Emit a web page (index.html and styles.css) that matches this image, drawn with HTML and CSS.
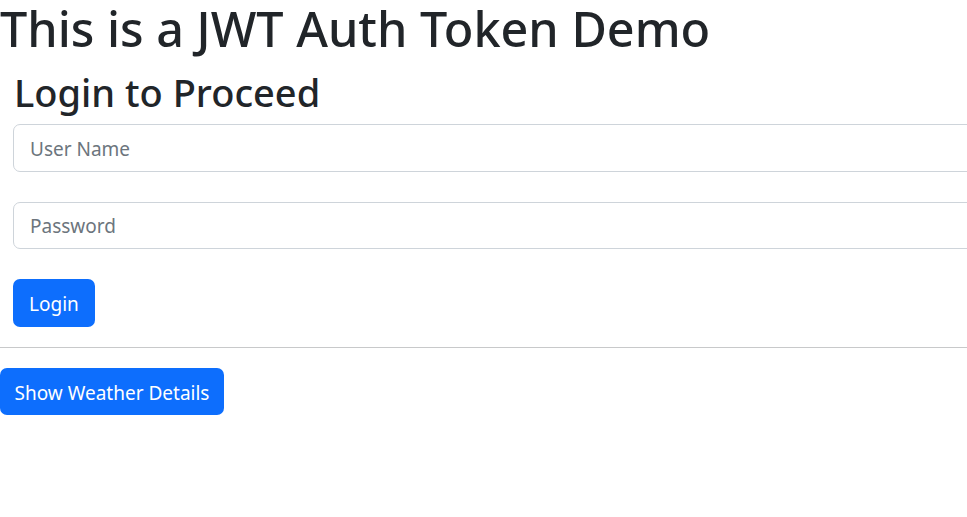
FILE: index.html
```html
<!DOCTYPE html>
<html lang="en">
<head>
<meta charset="utf-8">
<title>JWT Auth Token Demo</title>
<link rel="stylesheet" href="styles.css">
</head>
<body>
<h1 class="title">This is a JWT Auth Token Demo</h1>
<section class="login">
  <h2 class="login-title">Login to Proceed</h2>
  <form class="login-form">
    <input class="field" type="text" placeholder="User Name">
    <input class="field" type="password" placeholder="Password">
    <div><button type="button" class="btn">Login</button></div>
  </form>
</section>
<hr class="divider">
<button type="button" class="btn">Show Weather Details</button>
</body>
</html>
```

FILE: styles.css
```css
html, body {
  margin: 0;
  overflow: hidden;
  background: #fff;
}
body {
  font-family: "Noto Sans", "Open Sans", sans-serif;
  color: #212529;
  font-size: 20px;
}
.title {
  margin: 0;
  font-size: 48.5px;
  font-weight: 500;
  line-height: 56px;
}
.login {
  padding: 11px 0 0 13px;
}
.login-title {
  margin: 0 0 7px 1px;
  font-size: 38px;
  font-weight: 500;
  line-height: 50px;
}
.login-form {
  display: flex;
  flex-direction: column;
  gap: 30px;
}
.field {
  box-sizing: border-box;
  width: calc(100% + 40px);
  height: 47.5px;
  padding: 2px 16px 0;
  border: 1px solid #ced4da;
  border-radius: 7px;
  font-family: inherit;
  font-size: 19px;
  color: #212529;
}
.field::placeholder {
  color: #6c757d;
}
.btn {
  height: 47.5px;
  padding: 3px 15.5px 0;
  border: none;
  border-radius: 7px;
  background: #0d6efd;
  color: #fff;
  font-family: inherit;
  font-size: 19px;
}
.login-form .btn {
  padding: 2px 16px 0;
}
.divider {
  margin: 20px 0;
  border: 0;
  border-top: 1px solid #c8c9ca;
}
.divider + .btn {
  padding: 3px 14.5px 0;
}
```
